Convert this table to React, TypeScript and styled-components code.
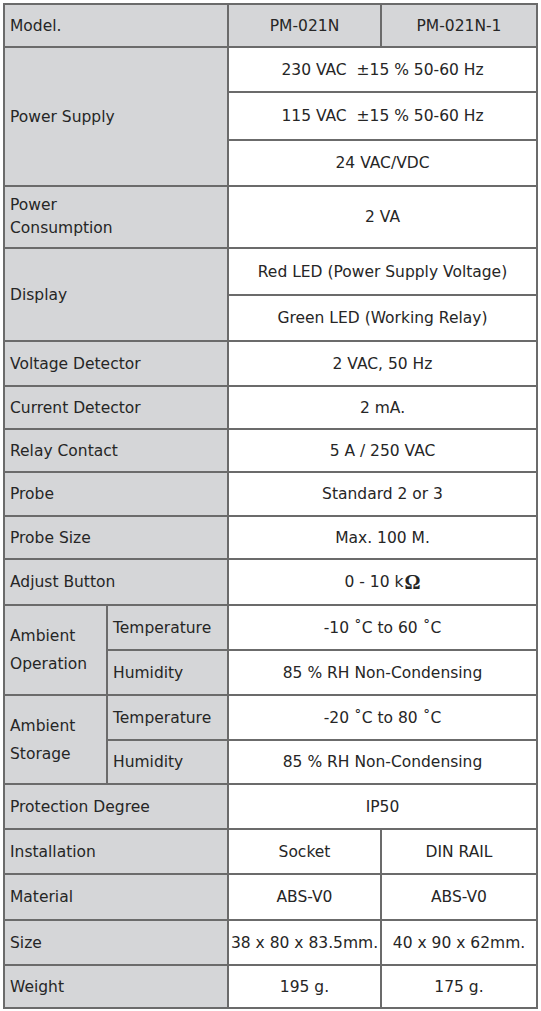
import * as React from 'react'
import styled, { createGlobalStyle } from 'styled-components'

const GlobalStyle = createGlobalStyle`
  html, body {
    margin: 0;
    padding: 0;
    background: #ffffff;
  }
  body {
    font-family: "DejaVu Sans", "Liberation Sans", sans-serif;
    color: #262626;
  }
`

const Page = styled.div`
  padding: 3px 0 0 3px;
`

// the grid background shows through the gaps as the table rules
const SpecTable = styled.div`
  display: grid;
  width: 535px;
  box-sizing: border-box;
  padding: 2px;
  gap: 2px;
  background: #6b6b6b;
  grid-template-columns: 101px 119px 151px 154px;
  grid-template-rows: 41px 43px 46px 44px 60px 45px 44px 43px 41px 41px 42px 41px 44px 43px 43px 43px 42px 43px 43px 44px 43px 41px;
`

type CellProps = {
  $row: string
  $col: string
  $lh?: number
}

const Label = styled.div<CellProps>`
  grid-row: ${p => p.$row};
  grid-column: ${p => p.$col};
  background: #d5d6d8;
  display: flex;
  align-items: center;
  padding-left: 5px;
  font-size: 15.5px;
  line-height: ${p => p.$lh || 20}px;
  white-space: nowrap;
`

const Value = styled.div<CellProps>`
  grid-row: ${p => p.$row};
  grid-column: ${p => p.$col};
  background: #ffffff;
  display: flex;
  align-items: center;
  justify-content: center;
  font-size: 15.5px;
  white-space: pre;
`

const HeadValue = styled(Value)`
  background: #d5d6d8;
`

const Ohm = styled.span`
  font-family: "Liberation Serif", "DejaVu Serif", serif;
  font-size: 20px;
  font-weight: bold;
  margin-left: 1px;
`

type Row = { label: string; value: React.ReactNode; pair?: [string, string] }

const simpleRows: Row[] = [
  { label: 'Voltage Detector', value: '2 VAC, 50 Hz' },
  { label: 'Current Detector', value: '2 mA.' },
  { label: 'Relay Contact', value: '5 A / 250 VAC' },
  { label: 'Probe', value: 'Standard 2 or 3' },
  { label: 'Probe Size', value: 'Max. 100 M.' },
  { label: 'Adjust Button', value: <>0 - 10 k<Ohm>Ω</Ohm></> },
]

const tailRows: Row[] = [
  { label: 'Protection Degree', value: 'IP50' },
  { label: 'Installation', value: null, pair: ['Socket', 'DIN RAIL'] },
  { label: 'Material', value: null, pair: ['ABS-V0', 'ABS-V0'] },
  { label: 'Size', value: null, pair: ['38 x 80 x 83.5mm.', '40 x 90 x 62mm.'] },
  { label: 'Weight', value: null, pair: ['195 g.', '175 g.'] },
]

function renderRow(r: Row, line: number) {
  return (
    <React.Fragment key={r.label}>
      <Label $row={`${line}`} $col="1 / 3">{r.label}</Label>
      {r.pair ? (
        <>
          <Value $row={`${line}`} $col="3">{r.pair[0]}</Value>
          <Value $row={`${line}`} $col="4">{r.pair[1]}</Value>
        </>
      ) : (
        <Value $row={`${line}`} $col="3 / 5">{r.value}</Value>
      )}
    </React.Fragment>
  )
}

export default function App() {
  return (
    <Page>
      <GlobalStyle />
      <SpecTable>
        <Label $row="1" $col="1 / 3">Model.</Label>
        <HeadValue $row="1" $col="3">PM-021N</HeadValue>
        <HeadValue $row="1" $col="4">PM-021N-1</HeadValue>

        <Label $row="2 / 5" $col="1 / 3">Power Supply</Label>
        <Value $row="2" $col="3 / 5">{'230 VAC  ±15 % 50-60 Hz'}</Value>
        <Value $row="3" $col="3 / 5">{'115 VAC  ±15 % 50-60 Hz'}</Value>
        <Value $row="4" $col="3 / 5">24 VAC/VDC</Value>

        <Label $row="5" $col="1 / 3" $lh={23}>Power<br />Consumption</Label>
        <Value $row="5" $col="3 / 5">2 VA</Value>

        <Label $row="6 / 8" $col="1 / 3">Display</Label>
        <Value $row="6" $col="3 / 5">Red LED (Power Supply Voltage)</Value>
        <Value $row="7" $col="3 / 5">Green LED (Working Relay)</Value>

        {simpleRows.map((r, i) => renderRow(r, 8 + i))}

        <Label $row="14 / 16" $col="1" $lh={28}>Ambient<br />Operation</Label>
        <Label $row="14" $col="2">Temperature</Label>
        <Label $row="15" $col="2">Humidity</Label>
        <Value $row="14" $col="3 / 5">{'-10 ˚C to 60 ˚C'}</Value>
        <Value $row="15" $col="3 / 5">85 % RH Non-Condensing</Value>

        <Label $row="16 / 18" $col="1" $lh={28}>Ambient<br />Storage</Label>
        <Label $row="16" $col="2">Temperature</Label>
        <Label $row="17" $col="2">Humidity</Label>
        <Value $row="16" $col="3 / 5">{'-20 ˚C to 80 ˚C'}</Value>
        <Value $row="17" $col="3 / 5">85 % RH Non-Condensing</Value>

        {tailRows.map((r, i) => renderRow(r, 18 + i))}
      </SpecTable>
    </Page>
  )
}
